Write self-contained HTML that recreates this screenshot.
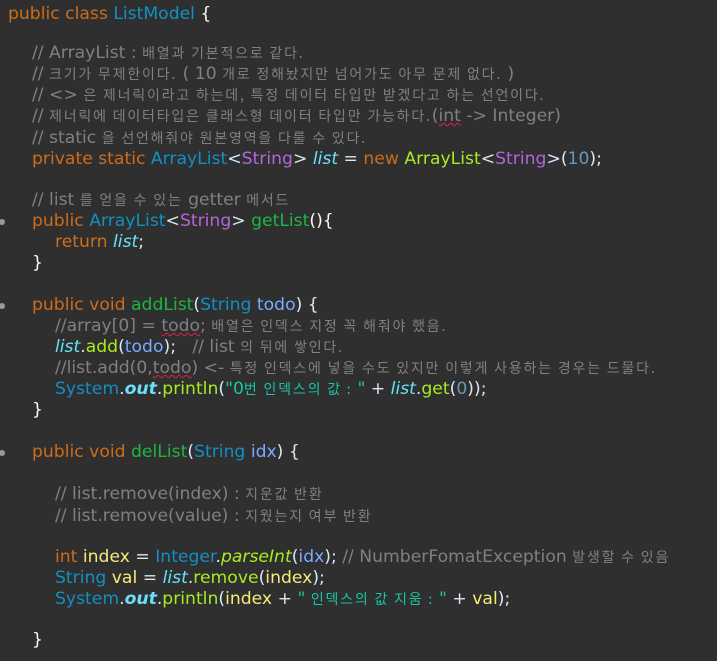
<!DOCTYPE html>
<html><head><meta charset="utf-8"><style>
body{margin:0;width:717px;height:661px;background:#2f2f2f;overflow:hidden;position:relative;font-family:"DejaVu Sans","Noto Sans CJK KR",sans-serif;font-size:17.2px;color:#d9e8f7}
.l{position:absolute;white-space:pre;line-height:21px;height:21px}
.k{color:#cc6c1d}.c{color:#1290c3}.s{color:#b166da}.v{color:#66e1f8;font-style:italic}
.g{color:#80f500}.m{color:#1eb540}.p{color:#79abff}.cm{color:#808080}.st{color:#17c6a3}
.w{color:#f9faf4}.n{color:#6897bb}.y{color:#f3ec79}.o{color:#a7ec21}
.ko{font-family:"Noto Sans CJK KR",sans-serif;font-size:14px;letter-spacing:1.8px}
.b{font-weight:bold}.i{font-style:italic}
.u{text-decoration:underline wavy #d24;text-decoration-thickness:1px}
.dot{position:absolute;left:-1px;width:6px;height:6px;border-radius:3px;background:#999}
</style></head><body>
<div class="l" style="left:8px;top:4px"><span class="k">public class </span><span class="c">ListModel</span><span class="w"> {</span></div>
<div class="l cm" style="left:32px;top:43px">// ArrayList : <span class="ko">배열과 기본적으로 같다.</span></div>
<div class="l cm" style="left:32px;top:64px">// <span class="ko">크기가 무제한이다.</span> ( 10 <span class="ko">개로 정해놨지만 넘어가도 아무 문제 없다.</span> )</div>
<div class="l cm" style="left:32px;top:85px">// &lt;&gt; <span class="ko">은 제너릭이라고 하는데, 특정 데이터 타입만 받겠다고 하는 선언이다.</span></div>
<div class="l cm" style="left:32px;top:106px">// <span class="ko">제너릭에 데이터타입은 클래스형 데이터 타입만 가능하다.</span>(<span class="u">int</span> -&gt; Integer)</div>
<div class="l cm" style="left:32px;top:128px">// static <span class="ko">을 선언해줘야 원본영역을 다룰 수 있다.</span></div>
<div class="l" style="left:32px;top:149px"><span class="k">private static </span><span class="c">ArrayList</span>&lt;<span class="s">String</span>&gt; <span class="v">list</span> = <span class="k">new </span><span class="o">ArrayList</span>&lt;<span class="s">String</span>&gt;(<span class="n">10</span>);</div>
<div class="l cm" style="left:32px;top:190px">// list <span class="ko">를 얻을 수 있는</span> getter <span class="ko">메서드</span></div>
<div class="dot" style="top:219px"></div>
<div class="l" style="left:32px;top:211px"><span class="k">public </span><span class="c">ArrayList</span>&lt;<span class="s">String</span>&gt; <span class="m">getList</span><span class="w">(){</span></div>
<div class="l" style="left:55px;top:232px"><span class="k">return </span><span class="v">list</span>;</div>
<div class="l w" style="left:32px;top:253px">}</div>
<div class="dot" style="top:303px"></div>
<div class="l" style="left:32px;top:295px"><span class="k">public void </span><span class="m">addList</span>(<span class="c">String </span><span class="p">todo</span>) {</div>
<div class="l cm" style="left:55px;top:316px">//array[0] = <span class="u">todo</span>; <span class="ko">배열은 인덱스 지정 꼭 해줘야 했음.</span></div>
<div class="l" style="left:55px;top:337px"><span class="v">list</span>.<span class="o">add</span>(<span class="p">todo</span>);   <span class="cm">// list <span class="ko">의 뒤에 쌓인다.</span></span></div>
<div class="l cm" style="left:55px;top:358px">//list.add(0,<span class="u">todo</span>) &lt;- <span class="ko">특정 인덱스에 넣을 수도 있지만 이렇게 사용하는 경우는 드물다.</span></div>
<div class="l" style="left:55px;top:379px"><span class="c">System</span>.<span class="v b">out</span>.<span class="o">println</span>(<span class="st">"0<span class="ko">번 인덱스의 값 : </span>"</span> + <span class="v">list</span>.<span class="o">get</span>(<span class="n">0</span>));</div>
<div class="l w" style="left:32px;top:400px">}</div>
<div class="dot" style="top:450px"></div>
<div class="l" style="left:32px;top:442px"><span class="k">public void </span><span class="m">delList</span>(<span class="c">String </span><span class="p">idx</span>) {</div>
<div class="l cm" style="left:55px;top:484px">// list.remove(index) : <span class="ko">지운값 반환</span></div>
<div class="l cm" style="left:55px;top:506px">// list.remove(value) : <span class="ko">지웠는지 여부 반환</span></div>
<div class="l" style="left:55px;top:547px"><span class="k">int </span><span class="y">index</span> = <span class="c">Integer</span>.<span class="o i">parseInt</span>(<span class="p">idx</span>); <span class="cm">// NumberFomatException <span class="ko">발생할 수 있음</span></span></div>
<div class="l" style="left:55px;top:568px"><span class="c">String </span><span class="y">val</span> = <span class="v">list</span>.<span class="o">remove</span>(<span class="y">index</span>);</div>
<div class="l" style="left:55px;top:589px"><span class="c">System</span>.<span class="v b">out</span>.<span class="o">println</span>(<span class="y">index</span> + <span class="st">" <span class="ko">인덱스의 값 지움 : </span>"</span> + <span class="y">val</span>);</div>
<div class="l w" style="left:32px;top:630px">}</div>
</body></html>
